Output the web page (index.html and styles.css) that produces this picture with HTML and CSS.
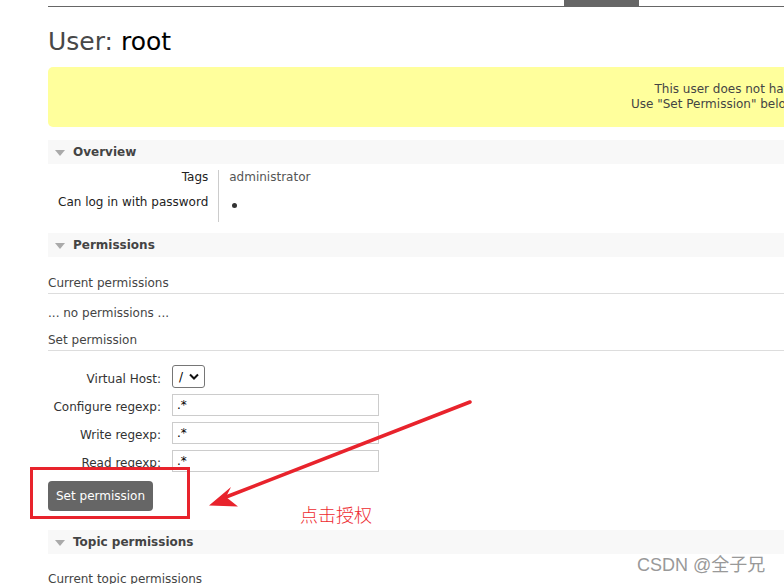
FILE: index.html
```html
<!DOCTYPE html>
<html>
<head>
<meta charset="utf-8">
<link rel="stylesheet" href="styles.css">
</head>
<body>
<div class="page">
  <div class="topnav"><span class="tab"></span></div>
  <h1>User: <b>root</b></h1>
  <div class="warning">This user does not have permission to access any virtual hosts.<br>Use "Set Permission" below to grant permission to access virtual hosts.</div>

  <div class="section-h overview-h"><svg class="tri" width="10" height="6" viewBox="0 0 10 6"><polygon points="0,0 10,0 5,6" fill="#aaa"/></svg><span>Overview</span></div>
  <table class="props">
    <tr><th>Tags</th><td>administrator</td></tr>
    <tr><th>Can log in with password</th><td><span class="dot"></span></td></tr>
  </table>

  <div class="section-h perm-h"><svg class="tri" width="10" height="6" viewBox="0 0 10 6"><polygon points="0,0 10,0 5,6" fill="#aaa"/></svg><span>Permissions</span></div>
  <h3 class="sub first">Current permissions</h3>
  <p class="none">... no permissions ...</p>
  <h3 class="sub">Set permission</h3>
  <div class="form">
    <label>Virtual Host:</label>
    <div class="select"><span>/</span><svg width="10" height="7" viewBox="0 0 10 7"><polyline points="1,1.5 5,5.5 9,1.5" fill="none" stroke="#111" stroke-width="2"/></svg></div>
    <label>Configure regexp:</label>
    <input class="field" type="text" value=".*">
    <label>Write regexp:</label>
    <input class="field" type="text" value=".*">
    <label>Read regexp:</label>
    <input class="field" type="text" value=".*">
  </div>
  <button class="btn">Set permission</button>

  <div class="section-h topic-h"><svg class="tri" width="10" height="6" viewBox="0 0 10 6"><polygon points="0,0 10,0 5,6" fill="#aaa"/></svg><span>Topic permissions</span></div>
  <h3 class="sub topic-sub">Current topic permissions</h3>

  <div class="annot-box"></div>
  <svg class="arrow" width="784" height="584" viewBox="0 0 784 584">
    <line x1="470" y1="402" x2="226" y2="497" stroke="#e8232c" stroke-width="3.5" stroke-linecap="round"/>
    <polygon points="209,505.5 231,487 226,497 238,506.5" fill="#e8232c"/>
  </svg>
  <div class="annot-text">点击授权</div>
  <div class="watermark">CSDN @全子兄</div>
</div>
</body>
</html>
```
FILE: styles.css
```css
html, body {
  margin: 0;
  padding: 0;
  overflow: hidden;
  background: #fff;
}

.page {
  position: relative;
  width: 1594px;
  padding-left: 48px;
  font-family: "DejaVu Sans", Verdana, sans-serif;
  font-size: 12px;
  color: #444;
}

.topnav {
  display: flex;
  height: 6px;
  border-bottom: 1px solid #666;
}

.topnav .tab {
  margin-left: 516px;
  width: 75px;
  background: #666;
}

h1 {
  margin: 20px 0 0;
  font-size: 25px;
  line-height: 30px;
  font-weight: normal;
  color: #484848;
}

h1 b {
  font-weight: normal;
  color: #000;
}

.warning {
  margin-top: 10px;
  background: #ffff9c;
  border-radius: 5px;
  padding: 15px;
  line-height: 15px;
  text-align: center;
  color: #444;
}

.section-h {
  display: flex;
  align-items: center;
  gap: 8px;
  margin-top: 12px;
  height: 24px;
  padding-left: 7px;
  background: #f8f8f8;
  font-weight: bold;
  color: #444;
}

.section-h.overview-h {
  margin-top: 13px;
}

.section-h .tri {
  margin-top: 1px;
}

.props {
  margin-top: 6px;
  border-collapse: collapse;
}

.props th {
  text-align: right;
  font-weight: normal;
  line-height: 14px;
  padding: 0 10px 11px 10px;
  border-right: 1px solid #ccc;
  color: #222;
  vertical-align: top;
}

.props td {
  line-height: 14px;
  padding: 0 0 11px 10px;
  vertical-align: top;
  color: #555;
}

.dot {
  display: inline-block;
  width: 5px;
  height: 5px;
  border-radius: 50%;
  background: #333;
  margin: 8px 0 0 3px;
}

.section-h.perm-h {
  margin-top: 11px;
}

.sub {
  margin: 13px 0 0;
  font-size: 12px;
  font-weight: normal;
  line-height: 14px;
  padding-bottom: 3px;
  border-bottom: 1px solid #ddd;
  color: #444;
}

.sub.first {
  margin-top: 19px;
}

.none {
  margin: 12px 0 0;
  line-height: 14px;
}

.form {
  display: grid;
  grid-template-columns: 113px auto;
  column-gap: 11px;
  row-gap: 6px;
  margin-top: 14px;
  justify-content: start;
}

.form label {
  text-align: right;
  align-self: center;
  padding-top: 4px;
  line-height: 14px;
  color: #333;
}

.select {
  display: inline-flex;
  align-items: center;
  gap: 6px;
  box-sizing: border-box;
  width: 33px;
  height: 23px;
  padding-left: 6px;
  border: 1px solid #767676;
  border-radius: 3px;
  color: #000;
  justify-self: start;
}

.field {
  box-sizing: border-box;
  width: 207px;
  height: 22px;
  margin: 0;
  padding: 0 4px;
  border: 1px solid #ccc;
  font-family: "DejaVu Sans", Verdana, sans-serif;
  font-size: 12px;
  color: #000;
  background: #fff;
}

.btn {
  display: block;
  margin-top: 9px;
  height: 30px;
  padding: 0 8px;
  border: none;
  border-radius: 4px;
  background: #666;
  color: #fff;
  font-family: "DejaVu Sans", Verdana, sans-serif;
  font-size: 12px;
}

.section-h.topic-h {
  margin-top: 19px;
}

.sub.topic-sub {
  margin-top: 18px;
  border-bottom: none;
}

.annot-box {
  position: absolute;
  left: 30px;
  top: 467px;
  width: 160px;
  height: 52px;
  box-sizing: border-box;
  border: 3px solid #e8232c;
}

.arrow {
  position: absolute;
  left: 0;
  top: 0;
  pointer-events: none;
}

.annot-text {
  position: absolute;
  left: 300px;
  top: 502px;
  font-family: "Noto Sans CJK SC", sans-serif;
  font-size: 18px;
  font-weight: 300;
  line-height: 24px;
  color: #ee2a2f;
}

.watermark {
  position: absolute;
  left: 637px;
  top: 553px;
  font-family: "Liberation Sans", "Noto Sans CJK SC", sans-serif;
  font-size: 18px;
  line-height: 24px;
  color: #999;
}
```
